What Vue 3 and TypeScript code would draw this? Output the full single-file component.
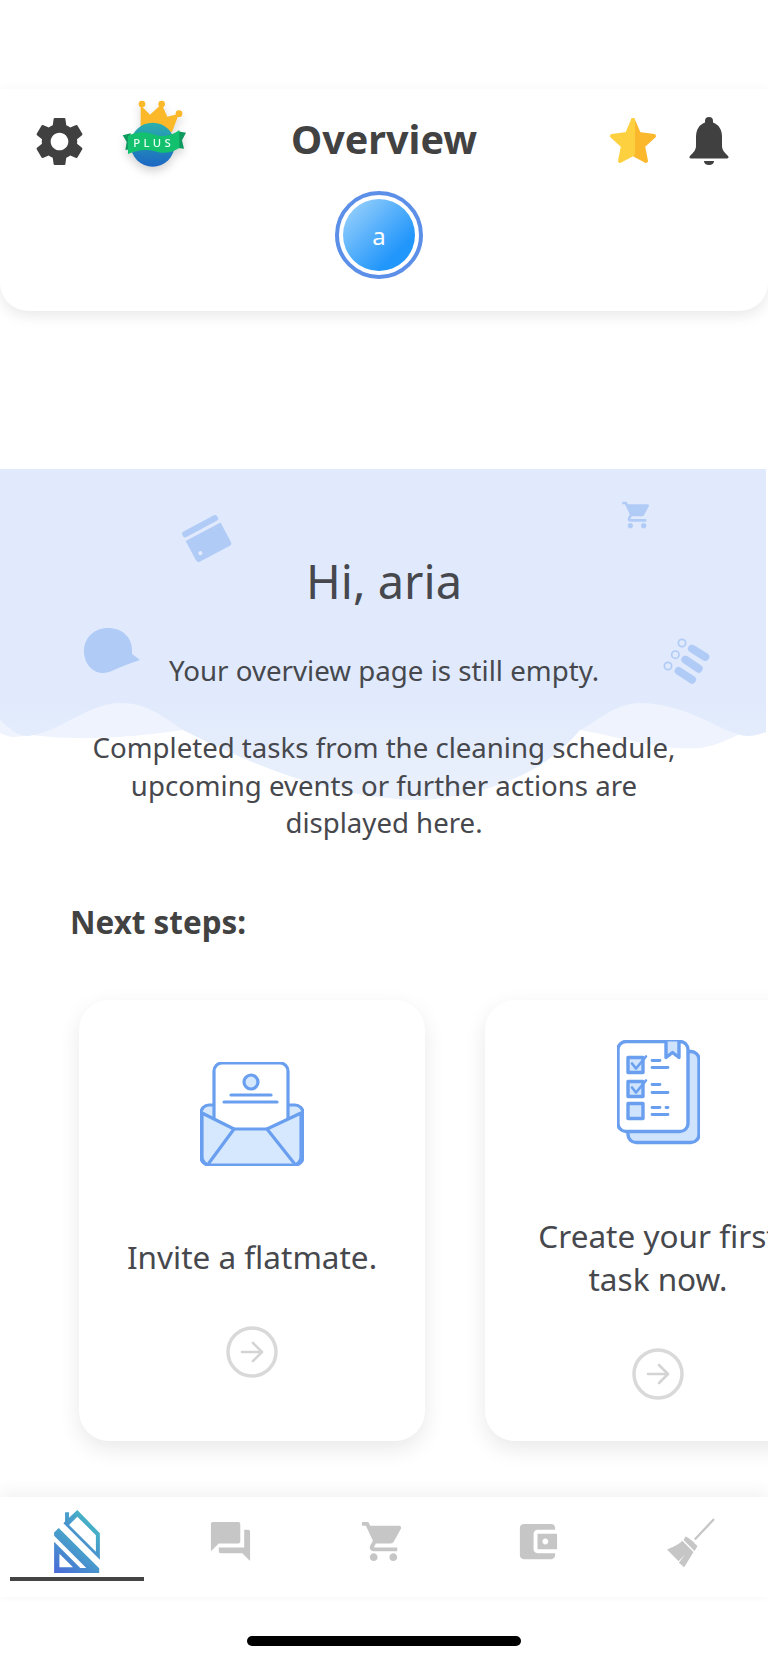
<script setup lang="ts">
// bottom navigation icons (material paths)
const tabs: { name: string; d: string }[] = [
  { name: 'chat', d: 'M21 6h-2v9H6v2c0 .55.45 1 1 1h11l4 4V7c0-.55-.45-1-1-1zm-4 6V3c0-.55-.45-1-1-1H3c-.55 0-1 .45-1 1v14l4-4h10c.55 0 1-.45 1-1z' },
  { name: 'cart', d: 'M7 18c-1.1 0-1.99.9-1.99 2S5.9 22 7 22s2-.9 2-2-.9-2-2-2zM1 2v2h2l3.6 7.59-1.35 2.45c-.16.28-.25.61-.25.96 0 1.1.9 2 2 2h12v-2H7.42c-.14 0-.25-.11-.25-.25l.03-.12.9-1.63h7.45c.75 0 1.41-.41 1.75-1.03l3.58-6.49c.08-.14.12-.31.12-.48 0-.55-.45-1-1-1H5.21l-.94-2H1zm16 16c-1.1 0-1.99.9-1.99 2s.89 2 1.99 2 2-.9 2-2-.9-2-2-2z' },
  { name: 'wallet', d: 'M21 18v1c0 1.1-.9 2-2 2H5c-1.11 0-2-.9-2-2V5c0-1.1.89-2 2-2h14c1.1 0 2 .9 2 2v1h-9c-1.11 0-2 .9-2 2v8c0 1.1.89 2 2 2h9zm-9-2h10V8H12v8zm4-2.5c-.83 0-1.5-.67-1.5-1.5s.67-1.5 1.5-1.5 1.5.67 1.5 1.5-.67 1.5-1.5 1.5z' }
]
const userName = 'aria'
</script>

<template>
  <div class="page">
    <main class="main">
      <header class="head">
        <div class="head-row">
          <div class="head-left">
            <svg class="gear" viewBox="0 0 24 24"><path d="M19.14 12.94c.04-.3.06-.61.06-.94 0-.32-.02-.64-.07-.94l2.03-1.58c.18-.14.23-.41.12-.61l-1.92-3.32c-.12-.22-.37-.29-.59-.22l-2.39.96c-.5-.38-1.03-.7-1.62-.94l-.36-2.54c-.04-.24-.24-.41-.48-.41h-3.84c-.24 0-.43.17-.47.41l-.36 2.54c-.59.24-1.13.57-1.62.94l-2.39-.96c-.22-.08-.47 0-.59.22L2.74 8.87c-.12.21-.08.47.12.61l2.03 1.58c-.05.3-.09.63-.09.94s.02.64.07.94l-2.03 1.58c-.18.14-.23.41-.12.61l1.92 3.32c.12.22.37.29.59.22l2.39-.96c.5.38 1.03.7 1.62.94l.36 2.54c.05.24.24.41.48.41h3.84c.24 0 .44-.17.47-.41l.36-2.54c.59-.24 1.13-.56 1.62-.94l2.39.96c.22.08.47 0 .59-.22l1.92-3.32c.12-.22.07-.47-.12-.61l-2.01-1.58zM12 15.6c-1.98 0-3.6-1.62-3.6-3.6s1.62-3.6 3.6-3.6 3.6 1.62 3.6 3.6-1.62 3.6-3.6 3.6z" fill="#404040"/></svg>
            <svg class="plus" viewBox="0 0 270 270">
              <defs>
                <linearGradient id="ball" x1="0" y1="0" x2="0" y2="1">
                  <stop offset="0" stop-color="#2bb0ad"/>
                  <stop offset="1" stop-color="#1c66c4"/>
                </linearGradient>
              </defs>
              <circle cx="96" cy="36" r="10" fill="#fbb829"/>
              <circle cx="155" cy="36" r="10" fill="#fbb829"/>
              <circle cx="207" cy="65" r="10" fill="#fbb829"/>
              <path d="M92 40 L120 68 L155 36 L172 74 L207 65 L186 120 L92 110 Z" fill="#fbb829"/>
              <circle cx="128" cy="158" r="66" fill="url(#ball)"/>
              <path d="M38 130 L62 124 V172 L46 174 L50 150 Z" fill="#0e9a5e"/>
              <path d="M228 122 L204 118 V168 L222 170 L216 145 Z" fill="#0e9a5e"/>
              <path d="M54 132 C90 112 120 124 140 130 C165 136 190 128 208 114 V168 C180 184 160 186 135 178 C105 170 85 174 54 186 Z" fill="#12c06e"/>
              <text x="70" y="165" class="plus-text">PLUS</text>
            </svg>
          </div>
          <h1 class="title">Overview</h1>
          <div class="head-right">
            <svg class="star" viewBox="0 0 50 48">
              <path d="M25 3 L31 17 L46 19 L35 29 L38 44 L25 37 Z" fill="#fbb82d" stroke="#fbb82d" stroke-width="4" stroke-linejoin="round"/>
              <path d="M25 3 L19 17 L4 19 L15 29 L12 44 L25 37 Z" fill="#fdd03f" stroke="#fdd03f" stroke-width="4" stroke-linejoin="round"/>
            </svg>
            <svg class="bell" viewBox="0 0 40 48">
              <path d="M20 0 a4 4 0 0 1 4 4 v1.5 C30 7.5 33 13 33 20 v9 c0 4 3 7 6 10 c1 1 .6 2.5 -1 2.5 H2 c-1.6 0 -2 -1.5 -1 -2.5 c3 -3 6 -6 6 -10 v-9 C7 13 10 7.5 16 5.5 V4 a4 4 0 0 1 4 -4z" fill="#404040"/>
              <path d="M15 44 h10 c0 2.5 -2 4 -5 4 s-5 -1.5 -5 -4z" fill="#404040"/>
            </svg>
          </div>
        </div>
        <div class="avatar"><span class="avatar-in">a</span></div>
      </header>

      <section class="hero">
        <svg class="hero-bg" viewBox="0 0 768 340" width="768" height="340">
          <defs>
            <linearGradient id="wave" x1="0" y1="0" x2="0" y2="1">
              <stop offset="0.7" stop-color="#e0eafc"/>
              <stop offset="1" stop-color="#ebf1fc"/>
            </linearGradient>
          </defs>
          <path d="M0 264 C5 266 10 268 14 268 L33 266 C60 270 110 272 183 261 L580 261 C620 268 660 282 700 279 C720 277 745 262 766 253 V230 H0 Z" fill="#eef3fd"/>
          <path d="M0 0 H766 V263 C754 268 745 268 734 264 C710 255 680 234 640 234 C615 234 598 252 580 261 C560 285 520 322 425 331 C340 331 260 300 183 261 C160 245 145 234 120 234 C90 234 60 262 33 266 C20 270 10 260 0 251 Z" fill="url(#wave)"/>
        </svg>

        <!-- card -->
        <svg class="deco deco-card" viewBox="0 0 50 50">
          <g transform="rotate(-28 25 25)">
            <g fill="#b1cbf7">
              <rect x="6" y="8" width="38" height="6" rx="2.5"/>
              <path d="M6 17 H44 V38 a3 3 0 0 1 -3 3 H9 a3 3 0 0 1 -3 -3 Z"/>
            </g>
            <circle cx="13" cy="34" r="2" fill="#e0eafc"/>
          </g>
        </svg>
        <!-- cart -->
        <svg class="deco deco-cart" viewBox="0 0 24 24"><path d="M7 18c-1.1 0-1.99.9-1.99 2S5.9 22 7 22s2-.9 2-2-.9-2-2-2zM1 2v2h2l3.6 7.59-1.35 2.45c-.16.28-.25.61-.25.96 0 1.1.9 2 2 2h12v-2H7.42c-.14 0-.25-.11-.25-.25l.03-.12.9-1.63h7.45c.75 0 1.41-.41 1.75-1.03l3.58-6.49c.08-.14.12-.31.12-.48 0-.55-.45-1-1-1H5.21l-.94-2H1zm16 16c-1.1 0-1.99.9-1.99 2s.89 2 1.99 2 2-.9 2-2-.9-2-2-2z" fill="#b1cbf7"/></svg>
        <!-- bubble -->
        <svg class="deco deco-bubble" viewBox="0 0 56 46"><path d="M24 0 C38 0 48 9 48 22 C48 24 48 25 48 26 L56 32 C47 35 38 38 30 42 C26 44 22 45 19 45 C8 45 0 35 0 23 C0 10 10 0 24 0 Z" fill="#b1cbf7"/></svg>
        <!-- list -->
        <svg class="deco deco-list" viewBox="835 530 150 150">
          <path d="M925 565 L965 590 M905 598 L945 625 M885 632 L925 658" fill="none" stroke="#b1cbf7" stroke-width="24" stroke-linecap="round"/>
          <g fill="none" stroke="#b1cbf7" stroke-width="5">
            <circle cx="895" cy="548" r="11"/>
            <circle cx="875" cy="583" r="11"/>
            <circle cx="853" cy="617" r="11"/>
          </g>
        </svg>

        <h2 class="hello">Hi, {{ userName }}</h2>
        <p class="empty">Your overview page is still empty.</p>
        <p class="info">Completed tasks from the cleaning schedule, upcoming events or further actions are displayed here.</p>
      </section>

      <h3 class="steps">Next steps:</h3>

      <div class="cards">
        <div class="card">
          <svg class="card-icon" width="104" height="104" viewBox="-1 -1 104 104">
            <g stroke="#6a9ff0" stroke-width="3.2" stroke-linejoin="round" stroke-linecap="round">
              <rect x="0" y="42" width="102" height="60" rx="8" fill="#d6e8fd"/>
              <rect x="13" y="0" width="74" height="80" rx="8" fill="#fff"/>
              <path d="M1 50 L33 66 H66 L100 50 V94 a8 8 0 0 1 -8 8 H9 a8 8 0 0 1 -8 -8 Z" fill="#d6e8fd"/>
              <path d="M33 66 L8 100 M66 66 L93 100" fill="none"/>
              <circle cx="50" cy="19" r="7" fill="#d6e8fd"/>
              <path d="M30 32 H70 M23 39 H76" fill="none"/>
            </g>
          </svg>
          <div class="card-text">Invite a flatmate.</div>
          <svg class="go" width="52" height="52" viewBox="0 0 52 52">
            <circle cx="26" cy="26" r="24" fill="none" stroke="#d9d9d9" stroke-width="3.5"/>
            <path d="M16 26 H35 M27 17 L36 26 L27 35" fill="none" stroke="#d4d4d4" stroke-width="2.6" stroke-linecap="round" stroke-linejoin="round"/>
          </svg>
        </div>
        <div class="card">
          <svg class="card-icon" width="83" height="105" viewBox="-1 -1 83 104">
            <g stroke="#6a9ff0" stroke-width="3.4" stroke-linejoin="round" stroke-linecap="round">
              <rect x="10" y="10" width="71" height="91" rx="8" fill="#cfe3fd"/>
              <rect x="0" y="0" width="70" height="90" rx="8" fill="#fff"/>
              <path d="M48 0 V16 L54.5 11 L61 16 V0" fill="#cfe3fd"/>
              <rect x="10" y="16" width="15" height="15" fill="#cfe3fd"/>
              <rect x="10" y="40" width="15" height="15" fill="#cfe3fd"/>
              <rect x="10" y="62" width="15" height="15" fill="#cfe3fd"/>
              <path d="M14 22 L18 27 L28 15 M14 46 L18 51 L28 39" fill="none" stroke-width="2.6"/>
              <path d="M34 19 H42 M34 26 H50 M34 43 H42 M34 51 H50 M34 66 H42 M48 66 H50 M34 73 H50" fill="none" stroke-width="2.8"/>
            </g>
          </svg>
          <div class="card-text">Create your first task now.</div>
          <svg class="go" width="52" height="52" viewBox="0 0 52 52">
            <circle cx="26" cy="26" r="24" fill="none" stroke="#d9d9d9" stroke-width="3.5"/>
            <path d="M16 26 H35 M27 17 L36 26 L27 35" fill="none" stroke="#d4d4d4" stroke-width="2.6" stroke-linecap="round" stroke-linejoin="round"/>
          </svg>
        </div>
      </div>
    </main>

    <nav class="tabbar">
      <div class="tab active">
        <svg class="logo" width="46" height="63" viewBox="162 90 138 190">
          <defs>
            <linearGradient id="brand" x1="0" y1="1" x2="0.8" y2="0">
              <stop offset="0" stop-color="#4a68d8"/>
              <stop offset="1" stop-color="#46c3c2"/>
            </linearGradient>
          </defs>
          <path fill="url(#brand)" fill-rule="evenodd" d="M195 97 H207 V113 L232 90 L300 160 V240 L190 130 L195 125 Z M232 110 L207 135 L288 216 V166 Z"/>
          <path fill="url(#brand)" fill-rule="evenodd" d="M162 158 L176 144 L298 266 V280 H162 Z M162 168 V186 L241 265 H259 Z M178 222 V263 H219 Z"/>
        </svg>
      </div>
      <div v-for="t in tabs" :key="t.name" class="tab">
        <svg class="tab-icon" width="47" height="47" viewBox="0 0 24 24"><path :d="t.d" fill="#c6c6c6"/></svg>
      </div>
      <div class="tab">
        <svg class="tab-icon" width="48" height="50" viewBox="850 110 145 150">
          <path d="M990 115 L936 172" stroke="#c6c6c6" stroke-width="7" fill="none" stroke-linecap="round"/>
          <path d="M906 165 C915 168 930 180 942 195 L933 209 L900 176 Z" fill="#c6c6c6"/>
          <path d="M896 178 L930 212 L902 258 L886 245 L904 220 L885 240 L850 205 C865 198 885 190 896 178 Z" fill="#c6c6c6"/>
        </svg>
      </div>
    </nav>

    <div class="home-bar"><span class="home-pill"></span></div>
  </div>
</template>

<style>
html, body {
  margin: 0;
  background: #fff;
}
</style>

<style scoped>
.page {
  width: 768px;
  height: 1662px;
  overflow: hidden;
  display: flex;
  flex-direction: column;
  font-family: "Noto Sans", "Open Sans", sans-serif;
  color: #46484d;
  background: #fff;
}
.main {
  flex: 1;
  padding-top: 89px;
  min-height: 0;
}
.head {
  height: 222px;
  box-sizing: border-box;
  padding-top: 22px;
  background: #fff;
  border-radius: 0 0 28px 28px;
  box-shadow: 0 5px 14px rgba(0, 0, 0, 0.09);
}
.head-row {
  display: grid;
  grid-template-columns: 1fr auto 1fr;
  align-items: center;
  height: 60px;
}
.head-left {
  display: flex;
  align-items: center;
  padding-left: 30px;
}
.gear {
  width: 59px;
  height: 59px;
}
.plus {
  width: 90px;
  height: 90px;
  margin: -19px 0 -11px 21px;
  filter: drop-shadow(0 5px 4px rgba(0, 0, 0, 0.16));
}
.plus-text {
  font-size: 34px;
  font-weight: 500;
  letter-spacing: 10px;
  fill: #e9fff4;
}
.title {
  margin: -4px 0 0;
  font-size: 39.5px;
  line-height: 60px;
  font-weight: 700;
  color: #424242;
}
.head-right {
  display: flex;
  align-items: center;
  justify-content: flex-end;
  gap: 31px;
  padding-right: 39px;
}
.star {
  width: 50px;
  height: 48px;
}
.bell {
  width: 40px;
  height: 48px;
}
.avatar {
  width: 88px;
  height: 88px;
  box-sizing: border-box;
  margin: 20px auto 0;
  position: relative;
  left: -5px;
  padding: 4px;
  border: 4px solid #5b8fe8;
  border-radius: 50%;
}
.avatar-in {
  display: flex;
  align-items: center;
  justify-content: center;
  height: 100%;
  border-radius: 50%;
  background: linear-gradient(135deg, #a4d6fb 0%, #2196fb 75%);
  color: #fff;
  font-size: 24px;
}
.hero {
  position: relative;
  margin-top: 158px;
  padding-top: 82px;
  text-align: center;
}
.hero-bg {
  position: absolute;
  left: 0;
  top: 0;
  display: block;
}
.deco {
  position: absolute;
}
.deco-card {
  left: 181px;
  top: 44px;
  width: 52px;
  height: 52px;
}
.deco-cart {
  left: 621px;
  top: 30px;
  width: 32px;
  height: 32px;
}
.deco-bubble {
  left: 84px;
  top: 159px;
  width: 56px;
  height: 46px;
}
.deco-list {
  left: 662px;
  top: 168px;
  width: 50px;
  height: 50px;
}
.hello,
.empty,
.info {
  position: relative;
  margin: 0;
}
.hello {
  font-size: 47px;
  line-height: 60px;
  font-weight: 400;
}
.empty {
  margin-top: 40px;
  font-size: 27.7px;
  line-height: 38px;
}
.info {
  width: 600px;
  margin: 40px auto 0;
  font-size: 27.6px;
  line-height: 37.5px;
}
.steps {
  margin: 60px 0 0 70px;
  font-size: 31.4px;
  line-height: 40px;
  font-weight: 700;
  color: #424242;
}
.cards {
  display: flex;
  gap: 60px;
  margin-top: 58px;
  padding-left: 79px;
}
.card {
  flex: 0 0 346px;
  height: 441px;
  display: flex;
  flex-direction: column;
  align-items: center;
  justify-content: center;
  background: #fff;
  border-radius: 30px;
  box-shadow: 0 8px 22px rgba(0, 0, 0, 0.09);
}
.card-icon {
  display: block;
  margin-bottom: 69px;
}
.card-text {
  width: 300px;
  margin-bottom: 48px;
  font-size: 31.5px;
  line-height: 43px;
  text-align: center;
}
.go {
  display: block;
}
.tabbar {
  display: grid;
  grid-template-columns: repeat(5, 1fr);
  height: 100px;
  background: #fff;
  box-shadow: 0 -6px 14px rgba(0, 0, 0, 0.05), 0 4px 6px rgba(0, 0, 0, 0.012);
}
.tab {
  display: flex;
  justify-content: center;
  align-items: flex-start;
  padding-top: 21px;
}
.tab-icon {
  display: block;
}
.tab.active {
  padding-top: 13px;
  margin: 0 9.6px;
  height: 84px;
  box-sizing: border-box;
  border-bottom: 4px solid #444;
}
.logo {
  display: block;
}
.home-bar {
  height: 65px;
  display: flex;
  justify-content: center;
  padding-top: 39px;
  box-sizing: border-box;
}
.home-pill {
  width: 274px;
  height: 10px;
  border-radius: 5px;
  background: #000;
}
</style>
